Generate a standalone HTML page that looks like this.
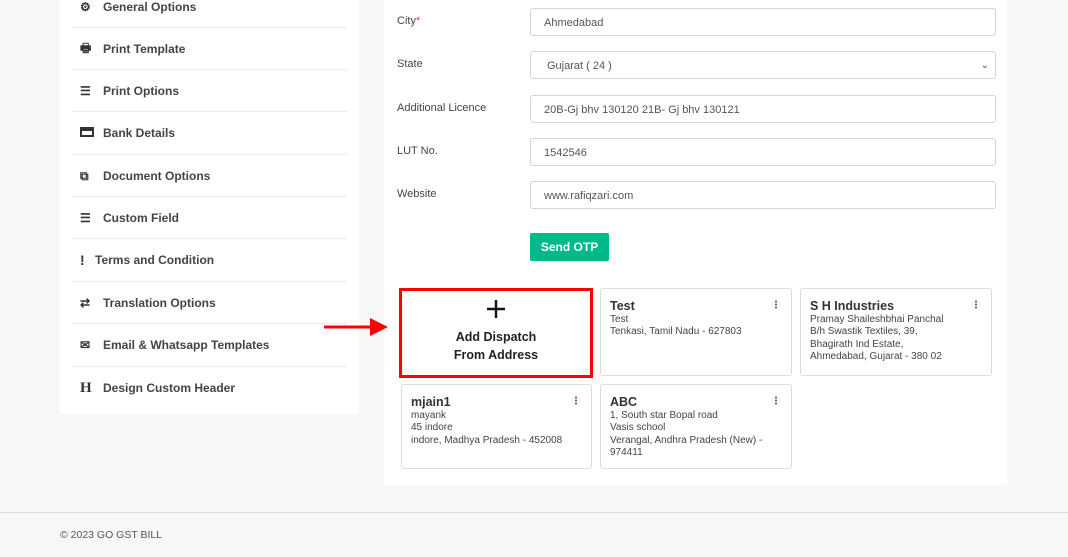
<!DOCTYPE html>
<html><head><style>
*{margin:0;padding:0;box-sizing:border-box}
body{width:1068px;height:557px;background:#f7f7f7;font-family:"Liberation Sans",sans-serif;position:relative;overflow:hidden;color:#333}
.a{position:absolute}
.side{left:60px;top:0;width:299px;height:414px;background:#fff}
.item{position:absolute;left:12px;width:275px;height:42px;font-size:12px;font-weight:bold;color:#444;display:flex;align-items:center;padding-top:2px}
.item .ic{width:23px;margin-left:8px;font-size:12px;color:#333}
.div{position:absolute;left:12px;width:275px;height:1px;background:#ececec}
.main{left:384px;top:0;width:623px;height:485px;background:#fff}
.lbl{position:absolute;left:13px;font-size:11px;color:#444}
.inp{position:absolute;left:146px;width:466px;height:28px;border:1px solid #d5d5d5;border-radius:3px;font-size:11px;color:#555;padding-left:13px;line-height:28px}
.card{position:absolute;border:1px solid #ddd;border-radius:3px;background:#fff;padding:9px 9px;font-size:10px;color:#444;line-height:12.3px}
.card b{display:block;font-size:12.5px;color:#333;font-weight:bold;line-height:16px;margin-bottom:0}
.dots{position:absolute;right:14px;top:11px;width:2px;height:9px;background:radial-gradient(circle,#666 1px,transparent 1.2px) 0 0/2px 3px}
</style></head><body>
<div class="a side">
 <div class="item" style="top:-15px"><span class="ic">⚙</span>General Options</div>
 <div class="div" style="top:27px"></div>
 <div class="item" style="top:27px"><span class="ic">🖶</span>Print Template</div>
 <div class="div" style="top:69px"></div>
 <div class="item" style="top:69px"><span class="ic">☰</span>Print Options</div>
 <div class="div" style="top:111px"></div>
 <div class="item" style="top:111px"><span class="ic"><span style="display:inline-block;width:14px;height:10px;border:2px solid #333;border-top-width:4px"></span></span>Bank Details</div>
 <div class="div" style="top:154px"></div>
 <div class="item" style="top:154px"><span class="ic">⧉</span>Document Options</div>
 <div class="div" style="top:196px"></div>
 <div class="item" style="top:196px"><span class="ic">☰</span>Custom Field</div>
 <div class="div" style="top:238px"></div>
 <div class="item" style="top:238px"><span class="ic" style="width:15px;font-weight:bold;font-size:14px">!</span>Terms and Condition</div>
 <div class="div" style="top:281px"></div>
 <div class="item" style="top:281px"><span class="ic">⇄</span>Translation Options</div>
 <div class="div" style="top:323px"></div>
 <div class="item" style="top:323px"><span class="ic">✉</span>Email &amp; Whatsapp Templates</div>
 <div class="div" style="top:366px"></div>
 <div class="item" style="top:366px"><span class="ic" style="font-family:'Liberation Serif',serif;font-size:15px">H</span>Design Custom Header</div>
</div>
<div class="a main">
 <div class="lbl" style="top:15px">City<span style="color:#e33">*</span></div>
 <div class="inp" style="top:8px">Ahmedabad</div>
 <div class="lbl" style="top:58px">State</div>
 <div class="inp" style="top:51px;padding-left:16px">Gujarat ( 24 )<span style="position:absolute;right:6px;top:0;font-size:10px">⌄</span></div>
 <div class="lbl" style="top:102px">Additional Licence</div>
 <div class="inp" style="top:95px">20B-Gj bhv 130120 21B- Gj bhv 130121</div>
 <div class="lbl" style="top:145px">LUT No.</div>
 <div class="inp" style="top:138px">1542546</div>
 <div class="lbl" style="top:188px">Website</div>
 <div class="inp" style="top:181px">www.rafiqzari.com</div>
 <div class="a" style="left:146px;top:233px;width:79px;height:28px;background:#00b98b;color:#fff;font-size:12px;font-weight:bold;text-align:center;line-height:28px;border-radius:2px">Send OTP</div>
 <div class="a" style="left:15px;top:288px;width:194px;height:90px;border:3px solid #f00;text-align:center;font-size:12.5px;font-weight:bold;color:#222;line-height:18px"><svg width="22" height="22" style="display:block;margin:7px auto 8px"><path d="M11 2V20M2 11H20" stroke="#111" stroke-width="2.4"/></svg>Add Dispatch<br>From Address</div>
 <div class="card" style="left:216px;top:288px;width:192px;height:88px"><b>Test</b>Test<br>Tenkasi, Tamil Nadu - 627803<div class="dots"></div></div>
 <div class="card" style="left:416px;top:288px;width:192px;height:88px"><b>S H Industries</b>Pramay Shaileshbhai Panchal<br>B/h Swastik Textiles, 39,<br>Bhagirath Ind Estate,<br>Ahmedabad, Gujarat - 380 02<div class="dots"></div></div>
 <div class="card" style="left:17px;top:384px;width:191px;height:85px"><b>mjain1</b>mayank<br>45 indore<br>indore, Madhya Pradesh - 452008<div class="dots"></div></div>
 <div class="card" style="left:216px;top:384px;width:192px;height:85px"><b>ABC</b>1, South star Bopal road<br>Vasis school<br>Verangal, Andhra Pradesh (New) -<br>974411<div class="dots"></div></div>
</div>
<svg class="a" style="left:322px;top:316px" width="68" height="22"><line x1="2" y1="11" x2="52" y2="11" stroke="#f00" stroke-width="3"/><polygon points="48,2 66,11 48,20" fill="#f00"/></svg>
<div class="a" style="left:0;top:512px;width:1068px;height:1px;background:#ddd"></div>
<div class="a" style="left:60px;top:529px;font-size:10.5px;color:#555">© 2023 GO GST BILL</div>
</body></html>
